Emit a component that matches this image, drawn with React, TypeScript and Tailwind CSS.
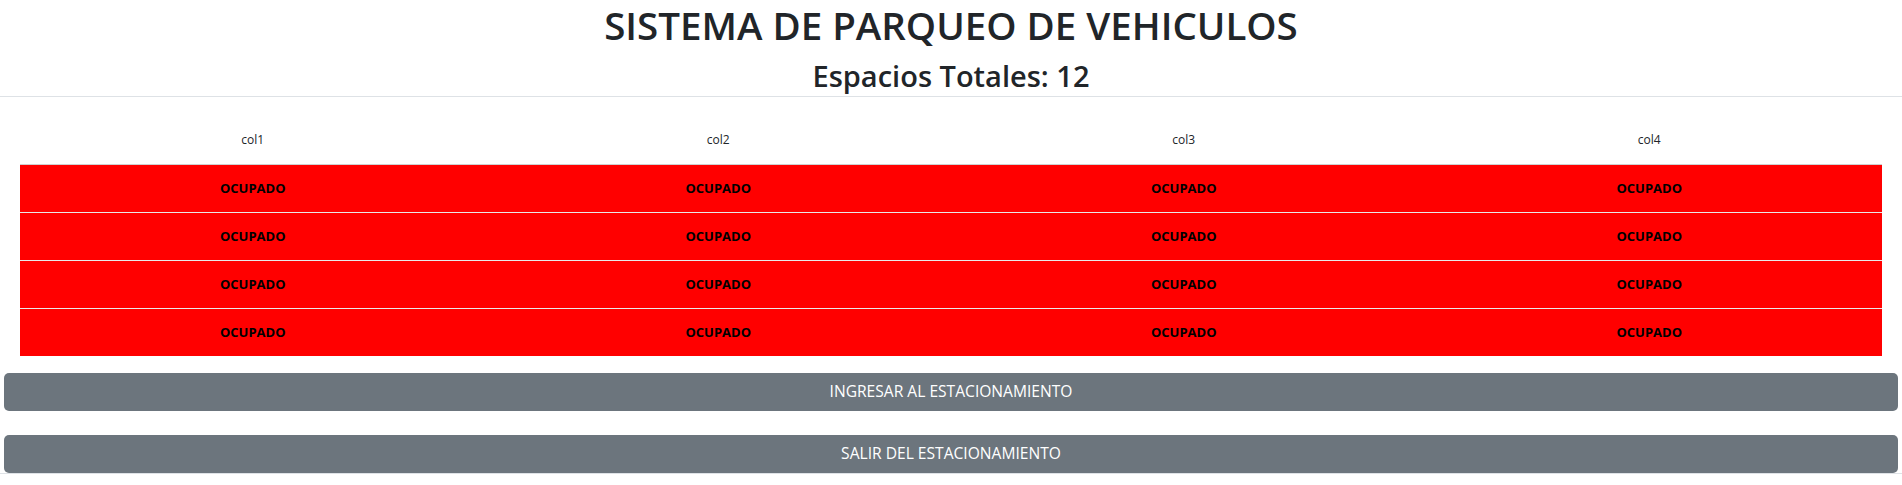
import React from "react";

const rows = [0, 1, 2, 3];
const cols = ["col1", "col2", "col3", "col4"];

export default function App() {
  return (
    <div className="w-[1902px] h-[485px] bg-white text-[#212529] font-['Open_Sans','Noto_Sans',sans-serif] overflow-hidden">
      <h1 className="pt-[2px] text-center text-[38.5px] leading-[47px] font-semibold mb-2">
        SISTEMA DE PARQUEO DE VEHICULOS
      </h1>
      <h2 className="text-center text-[29px] leading-[38px] font-semibold">
        Espacios Totales: 12
      </h2>
      <div className="mt-[1px] border-t border-[#dee2e6]" />
      <div className="px-[20px] pt-[19px]">
        <div className="grid grid-cols-4 h-[48px] items-center text-center text-[12px]">
          {cols.map((c) => (
            <div key={c}>{c}</div>
          ))}
        </div>
        {rows.map((r) => (
          <div
            key={r}
            className={`grid grid-cols-4 h-[48px] items-center text-center text-[13px] font-bold text-black bg-[#ff0000] border-t ${
              r === 0 ? "border-[#cfcfcf]" : "border-[#e9e9e9]"
            }`}
          >
            {cols.map((c) => (
              <div key={c}>OCUPADO</div>
            ))}
          </div>
        ))}
      </div>
      <div className="px-1 pt-[17px] flex flex-col gap-[24px]">
        <button className="h-[38px] w-full rounded-[5px] bg-[#6c757d] text-white text-[15.6px]">
          INGRESAR AL ESTACIONAMIENTO
        </button>
        <button className="h-[38px] w-full rounded-[5px] bg-[#6c757d] text-white text-[15.6px]">
          SALIR DEL ESTACIONAMIENTO
        </button>
      </div>
      <div className="border-t border-[#dee2e6]" />
    </div>
  );
}
